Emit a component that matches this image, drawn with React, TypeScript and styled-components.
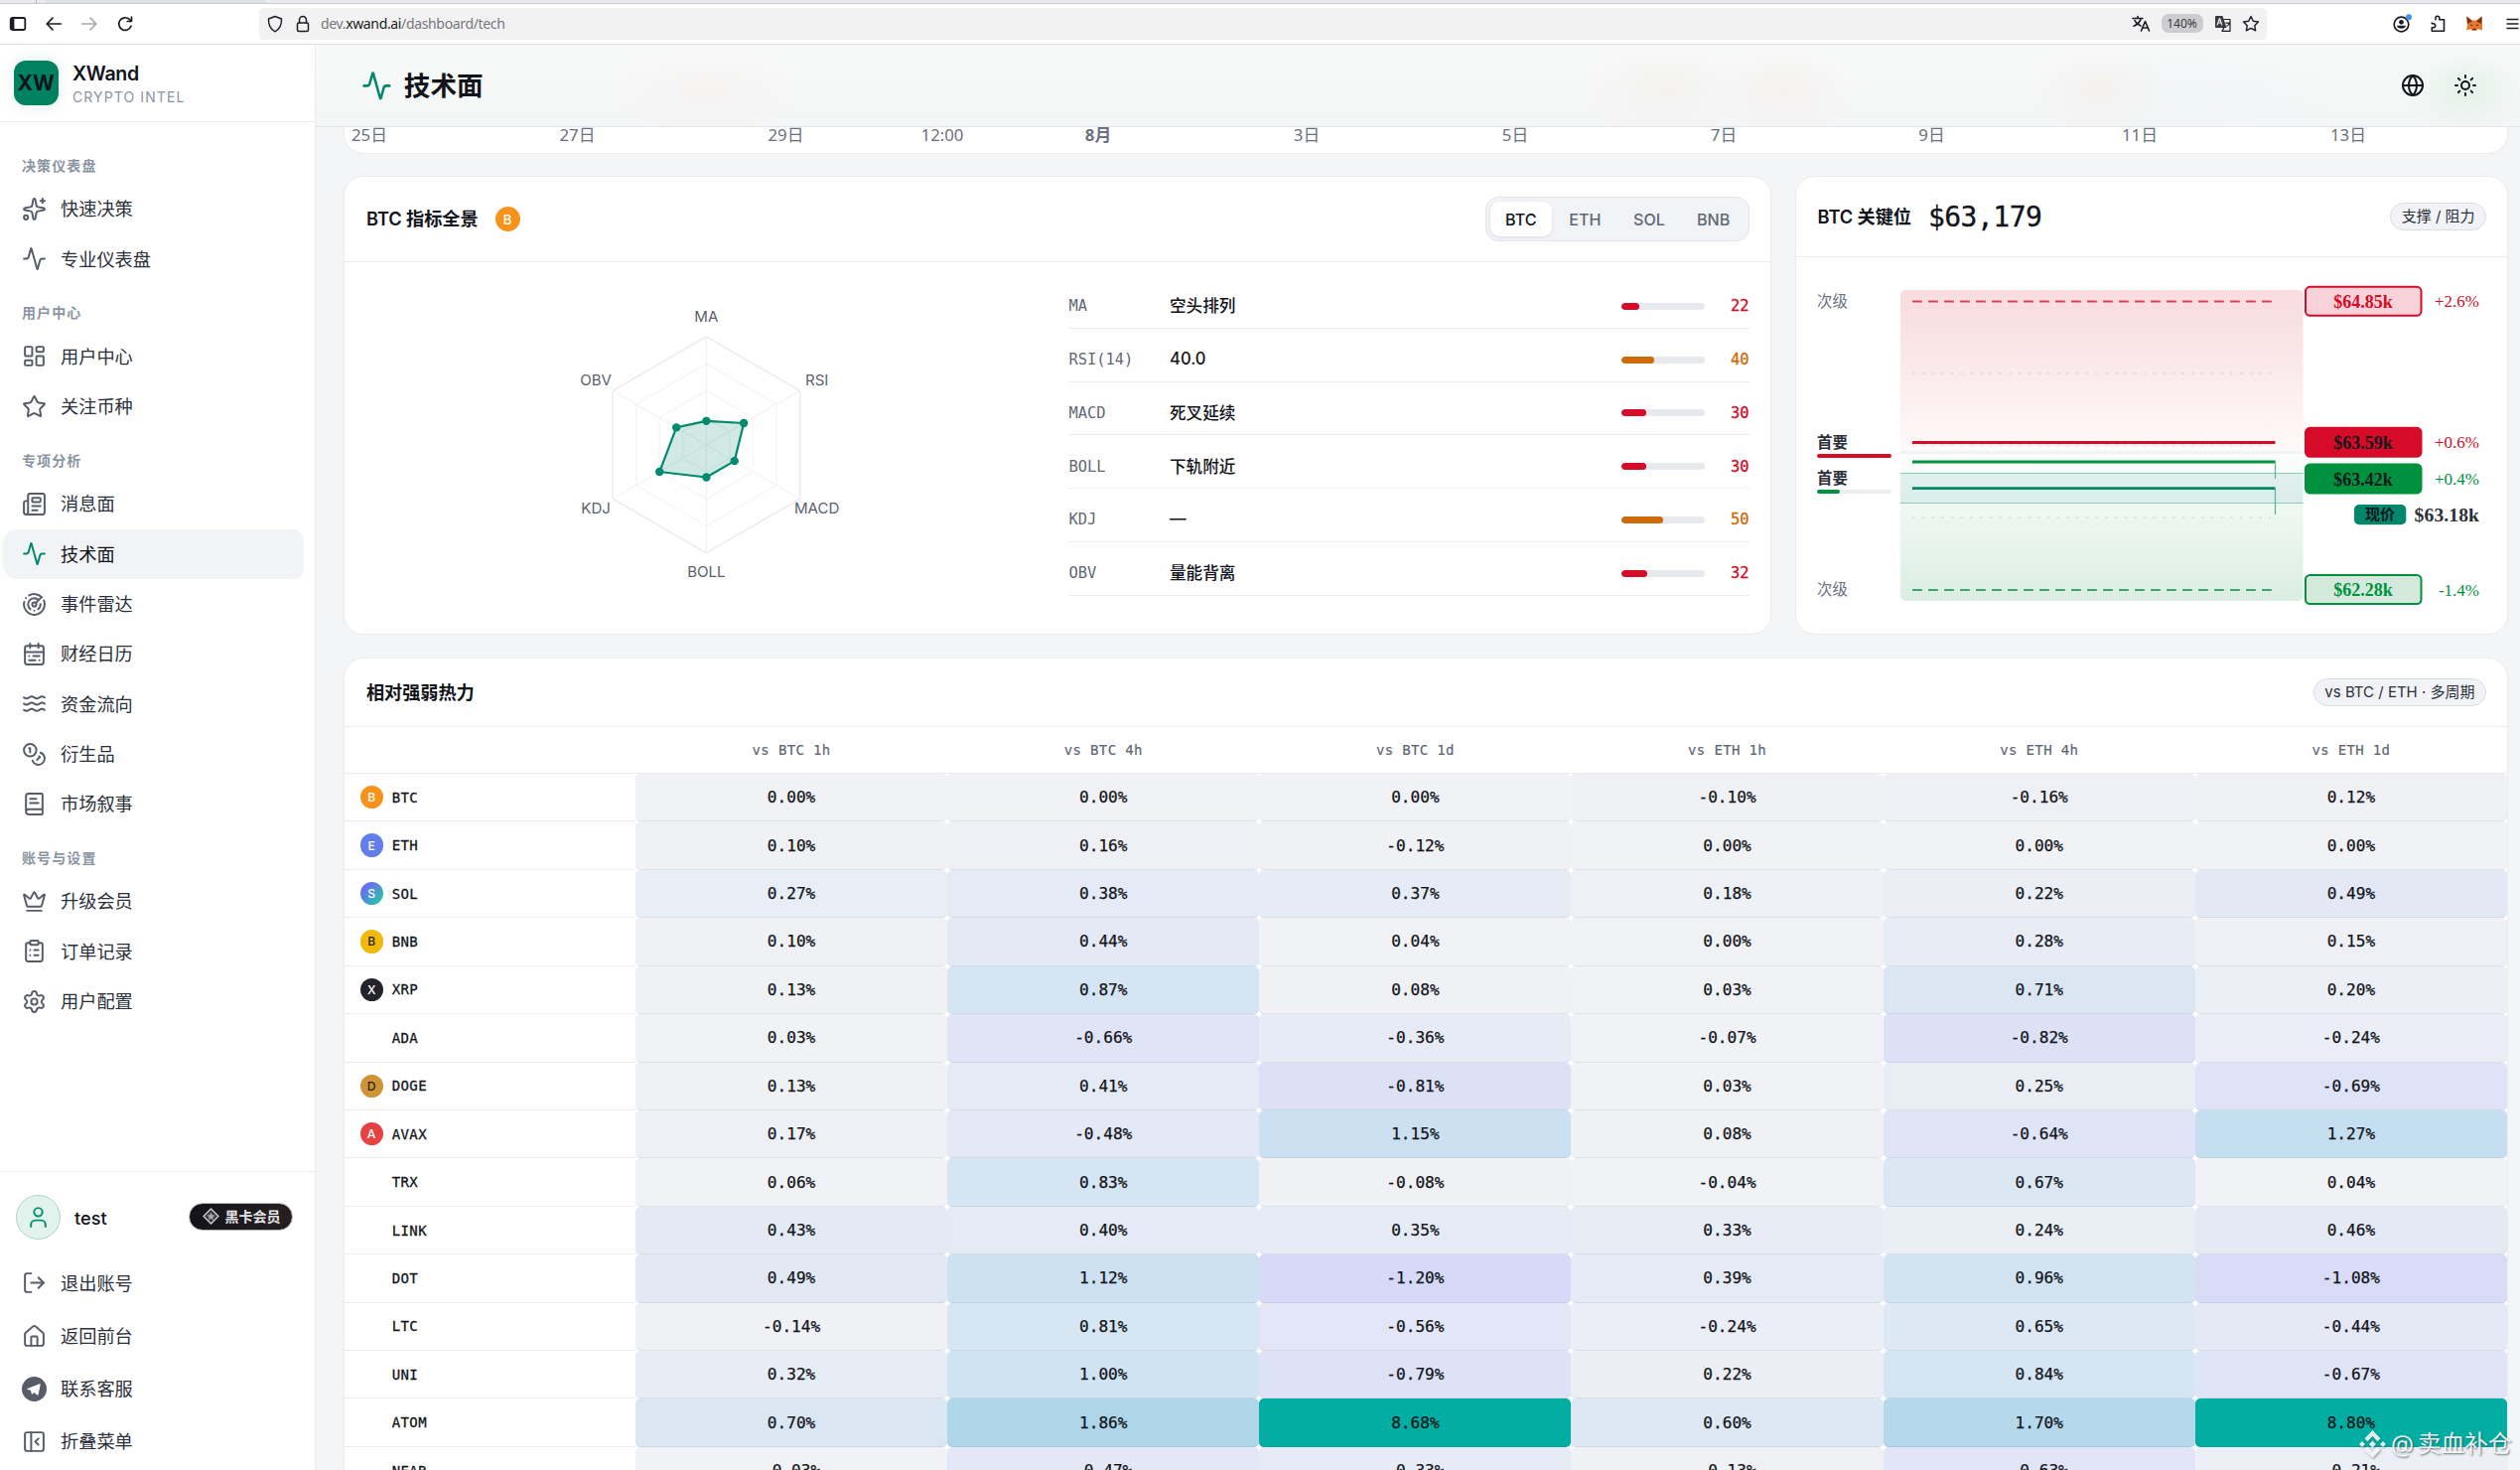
import React from "react";
import styled, { createGlobalStyle, css } from "styled-components";
import {
  Activity, BookText, CalendarRange, ClipboardList, Coins, Crown, Globe, House, LayoutDashboard,
  LogOut, Newspaper, PanelLeftClose, Radar, Settings, Sparkles, Star, Sun, User, Waves,
} from "lucide-react";

const sans = `Inter, "Noto Sans CJK SC", "Noto Sans", sans-serif`;
const mono = `"DejaVu Sans Mono", "Liberation Mono", "Noto Sans CJK SC", monospace`;
const serif = `"Liberation Serif", "Noto Sans CJK SC", serif`;

const c = {
  ink: "#11141a",
  text: "#2b303a",
  muted: "#5f6875",
  faint: "#8a95a3",
  line: "#ebecee",
  page: "#f4f5f7",
  brand: "#00876c",
  red: "#d50b27",
  green: "#00913f",
  amber: "#cf6a08",
};

const GlobalStyle = createGlobalStyle`
  * { box-sizing: border-box; }
  body { margin: 0; background: ${c.page}; font-family: ${sans}; color: ${c.ink}; }
`;

const Screen = styled.div`
  display: flex;
  flex-direction: column;
  width: 2538px;
  height: 1480px;
  overflow: hidden;
`;

/* ---------- browser chrome ---------- */
const TabStrip = styled.div`
  flex: none;
  display: flex;
  height: 4px;
  padding-left: 36px;
  background: #e9e9ee;
  border-bottom: 1px solid #c8c8cc;
`;
const TabEdge = styled.div`
  width: 222px;
  margin-left: 9px;
  background: #dde1e8;
`;
const TabDivider = styled.div`
  width: 1px;
  background: #b5b5bb;
`;
const Toolbar = styled.div`
  flex: none;
  display: flex;
  align-items: center;
  height: 41px;
  padding: 0 1.5px 1px 9px;
  background: #fff;
  border-bottom: 1px solid #dfdfe2;
  color: #1d1b24;
`;
const NavButtons = styled.div`
  display: flex;
  align-items: center;
  gap: 18px;
  width: 252px;
`;
const AddressBar = styled.div`
  display: flex;
  align-items: center;
  width: 2022px;
  height: 32px;
  padding: 0 7px 0 7px;
  border-radius: 6px;
  background: #f2f2f3;
`;
const Url = styled.div`
  margin-left: 9px;
  flex: 1;
  font: 14px "Noto Sans", sans-serif;
  letter-spacing: -0.35px;
  color: #77767d;
  b { font-weight: 400; color: #1d1b24; }
`;
const Zoom = styled.div`
  width: 42px;
  height: 19px;
  margin: 0 10.5px 0 9.5px;
  border-radius: 7px;
  background: #cdcdd1;
  font: 12px/19px "Noto Sans", sans-serif;
  text-align: center;
  color: #3a3942;
`;
const StarSlot = styled.span`
  display: flex;
  margin-left: 9px;
`;
const Extensions = styled.div`
  flex: 1;
  display: flex;
  align-items: center;
  justify-content: flex-end;
  gap: 17.5px;
`;
const MenuSlot = styled.span`
  display: flex;
  margin-left: 5.5px;
`;
const LockGap = styled.span`
  display: flex;
  margin-left: 10px;
`;

/* ---------- shell ---------- */
const Shell = styled.div`
  flex: 1;
  display: flex;
  min-height: 0;
`;
const Sidebar = styled.aside`
  flex: none;
  display: flex;
  flex-direction: column;
  width: 318px;
  background: #fff;
  border-right: 1px solid ${c.line};
`;
const Brand = styled.div`
  display: flex;
  align-items: center;
  gap: 14.5px;
  height: 78px;
  padding-left: 14px;
  border-bottom: 1px solid ${c.line};
`;
const Logo = styled.div`
  display: grid;
  place-items: center;
  width: 44.5px;
  height: 45px;
  border-radius: 12px;
  background: #008261;
  box-shadow: 0 0 16px rgba(0, 135, 108, 0.12);
  font-size: 21px;
  font-weight: 700;
  color: #10151b;
`;
const BrandName = styled.div`
  padding-top: 1px;
  font-size: 19.6px;
  font-weight: 600;
  line-height: 26px;
  letter-spacing: -0.3px;
`;
const BrandSub = styled.div`
  padding-top: 1px;
  font-size: 14px;
  line-height: 20px;
  letter-spacing: 1.1px;
  color: ${c.faint};
`;
const Nav = styled.nav`
  flex: 1;
  padding: 14.5px 11px 0 5px;
`;
const NavLabel = styled.div`
  height: 47.8px;
  padding: 18.5px 0 0 17px;
  font-size: 14px;
  font-weight: 600;
  line-height: 22px;
  letter-spacing: 1.1px;
  color: ${c.faint};
`;
const NavItem = styled.a<{ $active?: boolean; $foot?: boolean }>`
  display: flex;
  align-items: center;
  gap: 14px;
  height: 50.33px;
  margin-bottom: ${(p) => (p.$foot ? 2.8 : 0)}px;
  padding-left: 17px;
  border-radius: 11px;
  font-size: 18.2px;
  line-height: 26px;
  color: ${(p) => (p.$active ? c.ink : c.text)};
  svg { color: ${(p) => (p.$active ? c.brand : "#565d69")}; }
  ${(p) => p.$active && css`
    background: #f1f3f7;
    box-shadow: -7px 0 7px -9px rgba(0, 145, 80, 0.3);
  `}
`;
const SideFoot = styled.div`
  height: 301px;
  padding: 23px 11px 0 5px;
  border-top: 1px solid ${c.line};
`;
const Account = styled.div`
  display: flex;
  align-items: center;
  height: 45px;
  margin-bottom: 18.8px;
  padding: 0 11px 0 11px;
`;
const Avatar = styled.div`
  display: grid;
  place-items: center;
  width: 45px;
  height: 45px;
  border: 1px solid #a9d6c9;
  border-radius: 50%;
  background: #e4f2ee;
  color: #00916c;
`;
const UserName = styled.div`
  flex: 1;
  margin-left: 14px;
  font-size: 18.2px;
  font-weight: 500;
`;
const TierPill = styled.div`
  display: flex;
  align-items: center;
  gap: 6px;
  height: 28px;
  margin-bottom: 1px;
  padding: 0 11.5px 1px 12.5px;
  border: 1px solid #b9b9be;
  border-radius: 14px;
  background: linear-gradient(90deg, #14131a, #261f22);
  font-size: 14px;
  font-weight: 700;
  line-height: 20px;
  color: #e4e4e8;
`;

const Main = styled.main`
  flex: 1;
  display: flex;
  flex-direction: column;
  min-width: 0;
`;
const TopBar = styled.header`
  flex: none;
  display: flex;
  align-items: center;
  height: 83px;
  padding: 0 43px 0 46px;
  border-bottom: 1px solid #e3e5e8;
  background:
    radial-gradient(60px 42px at 2166px 46px, #e2f2e9, rgba(226, 242, 233, 0)),
    radial-gradient(70px 45px at 1798px 46px, rgba(245, 240, 238, 0.8), rgba(245, 240, 238, 0)),
    radial-gradient(90px 50px at 1360px 44px, rgba(243, 241, 239, 0.8), rgba(243, 241, 239, 0)),
    radial-gradient(70px 46px at 1480px 46px, rgba(245, 240, 238, 0.8), rgba(245, 240, 238, 0)),
    radial-gradient(100px 46px at 395px 46px, rgba(246, 241, 239, 0.6), rgba(246, 241, 239, 0)),
    radial-gradient(160px 50px at 1880px 50px, rgba(240, 246, 247, 0.9), rgba(240, 246, 247, 0)),
    linear-gradient(#f8faf9, #f4f5f6);
`;
const PageTitle = styled.h1`
  flex: 1;
  margin: 0 0 0 12px;
  padding-bottom: 3px;
  font-size: 26.6px;
  font-weight: 700;
`;
const TopActions = styled.div`
  display: flex;
  gap: 29px;
`;
const Content = styled.div`
  flex: 1;
  display: flex;
  flex-direction: column;
  min-height: 0;
  padding: 0 12px 0 28px;
`;
const cardBox = css`
  background: #fff;
  border: 1px solid ${c.line};
`;
const TimelineTail = styled.section`
  ${cardBox}
  flex: none;
  height: 27px;
  margin-bottom: 22px;
  border-top: 0;
  border-radius: 0 0 20px 20px;
  svg { display: block; overflow: visible; }
`;
const CardRow = styled.div`
  flex: none;
  display: grid;
  grid-template-columns: 1437.5px 718.5px;
  justify-content: space-between;
  height: 462px;
  margin-bottom: 23px;
`;
const Card = styled.section`
  ${cardBox}
  display: flex;
  flex-direction: column;
  border-radius: 20px;
  overflow: hidden;
`;
const CardHead = styled.div<{ $h: number }>`
  flex: none;
  display: flex;
  align-items: center;
  height: ${(p) => p.$h}px;
  padding: 0 21px;
  border-bottom: 1px solid ${c.line};
`;
const CardTitle = styled.h2`
  margin: 0 0 0 1px;
  padding-bottom: 3px;
  font-size: 18.2px;
  font-weight: 600;
  letter-spacing: -0.08px;
`;
const Spacer = styled.div`
  flex: 1;
`;
const Pill = styled.span`
  display: flex;
  align-items: center;
  height: 28px;
  padding: 0 10.5px;
  border: 1px solid #d9dde6;
  border-radius: 14px;
  background: #f1f3f7;
  font-size: 15px;
  font-weight: 400;
  line-height: 20px;
  color: ${c.text};
`;
const Coin = styled.span<{ $bg: string; $fg?: string; $size: number }>`
  display: grid;
  place-items: center;
  width: ${(p) => p.$size}px;
  height: ${(p) => p.$size}px;
  border-radius: 50%;
  background: ${(p) => p.$bg};
  color: ${(p) => p.$fg || "#fff"};
  font: 500 ${(p) => p.$size * 0.52}px ${sans};
`;
const CoinSlot = styled.span`
  width: 23.3px;
`;
const TitleCoin = styled.span`
  margin-left: 17px;
`;
const Segments = styled.div`
  display: flex;
  gap: 2.8px;
  height: 45.5px;
  padding: 4px;
  border: 1px solid #e1e4e9;
  border-radius: 13px;
  background: #f1f3f7;
`;
const Segment = styled.button<{ $on?: boolean }>`
  width: 61.8px;
  padding: 0;
  border: 0;
  border-radius: 9px;
  background: ${(p) => (p.$on ? "#fff" : "transparent")};
  box-shadow: ${(p) => (p.$on ? "0 1px 3px rgba(20,24,40,.1)" : "none")};
  color: ${(p) => (p.$on ? c.ink : c.muted)};
  font: 450 16.1px ${sans};
`;
const Price = styled.span`
  margin-left: 17px;
  font: 28px ${mono};
  letter-spacing: -0.5px;
  -webkit-text-stroke: 0.3px currentColor;
`;
const PanoramaBody = styled.div`
  flex: 1;
  display: flex;
`;
const RadarBox = styled.div`
  width: 729.5px;
  svg { display: block; }
`;
const Indicators = styled.div`
  flex: 1;
  display: flex;
  flex-direction: column;
  gap: 9.8px;
  padding: 22.8px 21px 0 0;
`;
const Indicator = styled.div`
  display: grid;
  grid-template-columns: 101.5px 1fr 84px 45px;
  align-items: center;
  height: 44px;
  border-bottom: 1px solid ${c.line};
`;
const IndName = styled.span`
  font: 15.4px ${mono};
  color: ${c.muted};
`;
const IndValue = styled.span`
  padding-bottom: 2px;
  font-size: 16.6px;
  font-weight: 500;
`;
const Track = styled.div`
  height: 7px;
  border-radius: 3.5px;
  background: #e6e9ee;
  overflow: hidden;
`;
const Fill = styled.div<{ $color: string }>`
  height: 100%;
  border-radius: 3.5px;
  background: ${(p) => p.$color};
`;
const Score = styled.span<{ $color: string }>`
  font: 15.4px ${mono};
  text-align: right;
  color: ${(p) => p.$color};
  -webkit-text-stroke: 0.35px currentColor;
`;

/* ---------- heat table ---------- */
const HeatCard = styled(Card)`
  flex: 1;
  border-bottom: 0;
  border-radius: 20px 20px 0 0;
`;
const HeatRow = styled.div<{ $head?: boolean }>`
  flex: none;
  display: grid;
  grid-template-columns: 293px repeat(6, 1fr);
  height: ${(p) => (p.$head ? 47 : 48.43)}px;
  ${(p) => p.$head && css`border-bottom: 1px solid ${c.line};`}
`;
const HeatHead = styled.div`
  display: grid;
  place-items: center;
  font: 14px ${mono};
  letter-spacing: 0.35px;
  color: ${c.muted};
  -webkit-text-stroke: 0.2px currentColor;
`;
const Asset = styled.div`
  display: flex;
  align-items: center;
  gap: 9px;
  padding-left: 15.5px;
  border-bottom: 1px solid ${c.line};
  font: 14px ${mono};
  letter-spacing: 0.35px;
  -webkit-text-stroke: 0.3px currentColor;
  ${Coin} { -webkit-text-stroke: 0; letter-spacing: 0; }
`;
const Heat = styled.div`
  display: grid;
  place-items: center;
  border-bottom: 1px solid rgba(20, 24, 32, 0.07);
  border-radius: 5px;
  font: 16.1px ${mono};
  -webkit-text-stroke: 0.25px currentColor;
`;
const Watermark = styled.div`
  position: absolute;
  left: 2376px;
  top: 1438px;
  display: flex;
  align-items: center;
  gap: 5px;
  font-size: 23.8px;
  line-height: 32px;
  word-spacing: -3px;
  white-space: nowrap;
  color: rgba(255, 255, 255, 0.88);
  text-shadow: 1px 1px 2px rgba(60, 70, 80, 0.75);
  svg { filter: drop-shadow(1px 1px 1px rgba(60, 70, 80, 0.6)); }
`;

const sections = [
  { label: "决策仪表盘", items: [["快速决策", Sparkles], ["专业仪表盘", Activity]] },
  { label: "用户中心", items: [["用户中心", LayoutDashboard], ["关注币种", Star]] },
  {
    label: "专项分析",
    items: [["消息面", Newspaper], ["技术面", Activity], ["事件雷达", Radar], ["财经日历", CalendarRange],
      ["资金流向", Waves], ["衍生品", Coins], ["市场叙事", BookText]],
  },
  { label: "账号与设置", items: [["升级会员", Crown], ["订单记录", ClipboardList], ["用户配置", Settings]] },
] as { label: string; items: [string, React.ElementType][] }[];

const ticks: [string, number][] = [
  ["25日", 25], ["27日", 234.5], ["29日", 444.5], ["12:00", 602], ["8月", 759], ["3日", 969], ["5日", 1179],
  ["7日", 1389], ["9日", 1598.5], ["11日", 1808], ["13日", 2018],
];

const indicators: [string, string, number][] = [
  ["MA", "空头排列", 22], ["RSI(14)", "40.0", 40], ["MACD", "死叉延续", 30],
  ["BOLL", "下轨附近", 30], ["KDJ", "—", 50], ["OBV", "量能背离", 32],
];

const heads = ["vs BTC 1h", "vs BTC 4h", "vs BTC 1d", "vs ETH 1h", "vs ETH 4h", "vs ETH 1d"];
const rows: [string, number[]][] = [
  ["BTC", [0, 0, 0, -0.1, -0.16, 0.12]],
  ["ETH", [0.1, 0.16, -0.12, 0, 0, 0]],
  ["SOL", [0.27, 0.38, 0.37, 0.18, 0.22, 0.49]],
  ["BNB", [0.1, 0.44, 0.04, 0, 0.28, 0.15]],
  ["XRP", [0.13, 0.87, 0.08, 0.03, 0.71, 0.2]],
  ["ADA", [0.03, -0.66, -0.36, -0.07, -0.82, -0.24]],
  ["DOGE", [0.13, 0.41, -0.81, 0.03, 0.25, -0.69]],
  ["AVAX", [0.17, -0.48, 1.15, 0.08, -0.64, 1.27]],
  ["TRX", [0.06, 0.83, -0.08, -0.04, 0.67, 0.04]],
  ["LINK", [0.43, 0.4, 0.35, 0.33, 0.24, 0.46]],
  ["DOT", [0.49, 1.12, -1.2, 0.39, 0.96, -1.08]],
  ["LTC", [-0.14, 0.81, -0.56, -0.24, 0.65, -0.44]],
  ["UNI", [0.32, 1, -0.79, 0.22, 0.84, -0.67]],
  ["ATOM", [0.7, 1.86, 8.68, 0.6, 1.7, 8.8]],
  ["NEAR", [-0.03, -0.47, -0.33, -0.13, -0.63, -0.21]],
];
const coins: Record<string, [string, string?]> = {
  BTC: ["#f7931a"], ETH: ["#627eea"], SOL: ["linear-gradient(135deg, #6a6ff0 25%, #22c9a4 90%)"],
  BNB: ["#f0b90b", "#2b2118"], XRP: ["#23232b"], DOGE: ["#cf9436", "#2b2118"], AVAX: ["#e84142"],
};

type Stop = [number, number[]];
const up: Stop[] = [
  [0, [241, 242, 246]], [0.12, [240, 241, 245]], [0.25, [233, 238, 245]], [0.5, [226, 233, 244]], [0.7, [218, 231, 243]],
  [0.87, [213, 229, 243]], [1.27, [198, 223, 240]], [1.86, [174, 213, 234]], [8.5, [2, 174, 162]], [10, [2, 174, 162]],
];
const down: Stop[] = [
  [0, [241, 242, 246]], [0.14, [239, 241, 245]], [0.3, [232, 236, 246]], [0.66, [224, 228, 247]],
  [0.82, [220, 225, 246]], [1.2, [214, 217, 248]], [10, [190, 195, 248]],
];
function heatColor(v: number) {
  const scale = v < 0 ? down : up;
  const a = Math.abs(v);
  const i = Math.max(1, scale.findIndex((s) => a <= s[0]));
  const [x0, c0] = scale[i - 1];
  const [x1, c1] = scale[i];
  const t = (a - x0) / (x1 - x0);
  return `rgb(${c0.map((n, k) => Math.round(n + (c1[k] - n) * t)).join(",")})`;
}
const scoreColor = (n: number) => (n < 40 ? c.red : c.amber);

function RadarChart() {
  const cx = 364.4, cy = 183.8, R = 108.9;
  const at = (i: number, r: number): [number, number] => {
    const a = (Math.PI / 3) * i - Math.PI / 2;
    return [cx + Math.cos(a) * r, cy + Math.sin(a) * r];
  };
  const ring = (r: number) => [0, 1, 2, 3, 4, 5].map((i) => at(i, r).join(",")).join(" ");
  const values = [22, 40, 30, 30, 50, 32];
  const names = ["MA", "RSI", "MACD", "BOLL", "KDJ", "OBV"];
  return (
    <svg width="729" height="373">
      {[0.25, 0.5, 0.75].map((k) => <polygon key={k} points={ring(R * k)} fill="none" stroke="#f5f5f6" strokeWidth="1.3" />)}
      <polygon points={ring(R)} fill="none" stroke="#ebebed" strokeWidth="1.5" />
      {names.map((n, i) => {
        const [x, y] = at(i, R);
        return <line key={n} x1={cx} y1={cy} x2={x} y2={y} stroke="#f3f3f4" strokeWidth="1.3" />;
      })}
      <polygon points={values.map((v, i) => at(i, (R * v) / 100).join(",")).join(" ")} fill="rgba(0,135,108,.18)" stroke="#008a6e" strokeWidth="2.2" strokeLinejoin="round" />
      {values.map((v, i) => {
        const [x, y] = at(i, (R * v) / 100);
        return <circle key={i} cx={x} cy={y} r="4.2" fill="#008a6e" />;
      })}
      {names.map((n, i) => {
        const [x, y] = at(i, 128.5);
        return <text key={n} x={x} y={y + 4.8} textAnchor="middle" fontFamily={sans} fontSize="15.1" fill="#5c6270">{n}</text>;
      })}
    </svg>
  );
}

function LevelsChart() {
  const boxes: [number, string, string, string, string][] = [
    [44.3, "$64.85k", "#f7d2d8", c.red, "+2.6%"],
    [186.3, "$63.59k", c.red, c.red, "+0.6%"],
    [223, "$63.42k", c.green, c.green, "+0.4%"],
    [334.5, "$62.28k", "#d2e9dc", c.green, "-1.4%"],
  ];
  return (
    <svg width="716" height="378" fontFamily={serif}>
      <defs>
        <linearGradient id="res" x1="0" y1="0" x2="0" y2="1">
          <stop offset="0" stopColor="#f8dce0" />
          <stop offset=".25" stopColor="#f9e2e4" />
          <stop offset="1" stopColor="#fffafa" />
        </linearGradient>
        <linearGradient id="sup" x1="0" y1="0" x2="0" y2="1">
          <stop offset="0" stopColor="#fcfefd" />
          <stop offset="1" stopColor="#dbeee3" />
        </linearGradient>
      </defs>
      <rect x="105" y="33" width="405.5" height="165" rx="5" fill="url(#res)" />
      <rect x="105" y="195" width="405.5" height="151" rx="5" fill="url(#sup)" />
      <rect x="105" y="195" width="405.5" height="3" fill="rgba(60,60,70,.05)" />
      {[117, 189.3, 262].map((y) => (
        <line key={y} x1="117" x2="478" y1={y} y2={y} stroke="rgba(90,60,70,.09)" strokeWidth="2" strokeDasharray="2.8 6.9" />
      ))}
      <rect x="105" y="217.5" width="405.5" height="30" fill="rgba(0,135,120,.09)" />
      <path d="M105 217.5h405.5M105 247.5h405.5" stroke="#8ccbbd" strokeWidth="1" />
      <line x1="117" x2="479" y1="44.5" y2="44.5" stroke="#db405a" strokeWidth="2.2" strokeDasharray="9.8 6.2" />
      <line x1="117" x2="479" y1="335" y2="335" stroke="#3da46d" strokeWidth="2.2" strokeDasharray="9.8 6.2" />
      <line x1="117" x2="482.5" y1="186.5" y2="186.5" stroke={c.red} strokeWidth="3" />
      <line x1="117" x2="482.5" y1="206" y2="206" stroke={c.green} strokeWidth="2.8" />
      <path d="M482.5 206v17M482.5 233v26" stroke="#5fb39b" strokeWidth="1.2" />
      <line x1="117" x2="482.5" y1="232.7" y2="232.7" stroke={c.brand} strokeWidth="2.8" />

      {boxes.map(([y, label, fill, stroke, pct], i) => (
        <g key={label}>
          <rect x="513" y={y - 14.5} width="116.5" height="29" rx="4.5" fill={fill} stroke={stroke} strokeWidth="2" />
          <text x="541.2" y={y + 6.7} fontSize="18" fontWeight="700" textLength="59.5" fill={i === 1 || i === 2 ? "#15181c" : stroke}>{label}</text>
          <text x="688" y={y + 6} fontSize="17" textAnchor="end" fill={stroke}>{pct}</text>
        </g>
      ))}
      <rect x="562" y="249" width="52.3" height="20.3" rx="5" fill={c.brand} />
      <text x="588" y="263.7" fontSize="15" fontWeight="700" fontFamily={sans} textAnchor="middle" fill="#10151b">现价</text>
      <text x="622.6" y="266.3" fontSize="19.6" fontWeight="700" textLength="65.4" fill="#2b303a">$63.18k</text>

      <g fontFamily={sans} fontSize="15.4" fill="#6b7280">
        <text x="21" y="49.5">次级</text>
        <text x="21" y="339.5">次级</text>
        <text x="21" y="192" fontWeight="700" fill="#2b303a">首要</text>
        <text x="21" y="228" fontWeight="700" fill="#2b303a">首要</text>
      </g>
      <rect x="21" y="198" width="75" height="4" rx="2" fill={c.red} />
      <rect x="21" y="234" width="75" height="4" rx="2" fill="#ededef" />
      <rect x="21" y="234" width="23" height="4" rx="2" fill={c.green} />
    </svg>
  );
}

const stroke = { fill: "none", stroke: "currentColor", strokeWidth: 1.5, strokeLinecap: "round" as const, strokeLinejoin: "round" as const };

function BrowserChrome() {
  return (
    <>
      <TabStrip><TabDivider /><TabEdge /></TabStrip>
      <Toolbar>
        <NavButtons>
          <svg width="18" height="16" viewBox="0 0 18 16"><rect x="1.7" y="2" width="14.6" height="12" rx="1.8" {...stroke} strokeWidth="1.8" /><path d="M2 2.5h3.4v11H2z" fill="currentColor" /></svg>
          <svg width="18" height="16" viewBox="0 0 18 16"><path d="M16.3 8H2.2M8 2.2 2.2 8 8 13.8" {...stroke} strokeWidth="1.7" /></svg>
          <svg width="18" height="16" viewBox="0 0 18 16" color="#a9a8ae"><path d="M1.7 8H15.8M10 2.2 15.8 8 10 13.8" {...stroke} strokeWidth="1.7" /></svg>
          <svg width="18" height="16" viewBox="0 0 18 16"><path d="M15 10.2A6.3 6.3 0 1 1 13.5 3.6L15.3 5.2M15.5 1.2V5.5H11.2" {...stroke} strokeWidth="1.7" /></svg>
        </NavButtons>
        <AddressBar>
          <svg width="18" height="18" viewBox="0 0 18 18"><path d="M9 1.5 15.5 4c.3 6-2 10.5-6.5 12.8C4.5 14.5 2.2 10 2.5 4Z" {...stroke} strokeWidth="1.4" /></svg>
          <LockGap><svg width="18" height="18" viewBox="0 0 18 18"><rect x="3.5" y="8" width="11" height="8.5" rx="1.5" {...stroke} /><path d="M5.5 8V5a3.5 3.5 0 0 1 7 0v3" {...stroke} /></svg></LockGap>
          <Url>dev.<b>xwand.ai</b>/dashboard/tech</Url>
          <svg width="20" height="18" viewBox="0 0 20 18"><path d="M1 3.5h10M6 1.5v2M9.3 3.5C8.5 7 5.5 9.7 2 11.2M3 5.5c1 2.5 3 4.3 6 5.5M9.5 16 13.5 6.5 17.5 16M11 13h5.2" {...stroke} strokeWidth="1.6" /></svg>
          <Zoom>140%</Zoom>
          <svg width="20" height="18" viewBox="0 0 20 18"><path d="M3 1h6.5l4 12H3a1 1 0 0 1-1-1V2a1 1 0 0 1 1-1Z" fill="#3a3942" /><path d="m4.2 10 2.3-6.5 2.3 6.5M5 8h3" {...stroke} stroke="#eee" strokeWidth="1.2" /><path d="M11 4.5h6v11.8H9l1.7-3.2M13 8.2h3.2c-.2 1.6-1.2 2.6-2.4 3" {...stroke} strokeWidth="1.2" /></svg>
          <StarSlot><svg width="18" height="18" viewBox="0 0 24 24"><path d="m12 2 3.1 6.3 6.9 1-5 4.9 1.2 6.8-6.2-3.2L5.8 21 7 14.2 2 9.3l6.9-1Z" {...stroke} strokeWidth="1.9" /></svg></StarSlot>
        </AddressBar>
        <Extensions>
          <svg width="20" height="20" viewBox="0 0 20 20"><circle cx="9.5" cy="10.5" r="7.3" {...stroke} strokeWidth="1.7" /><circle cx="9.5" cy="8.3" r="2.4" fill="currentColor" /><path d="M5 11.8h9c0 3.8-9 3.8-9 0Z" fill="currentColor" /><circle cx="17" cy="3.3" r="3" fill="#3c96e0" /></svg>
          <svg width="19" height="20" viewBox="0 0 19 20"><path d="M7 5.8V4.2a1.9 1.9 0 0 1 3.8 0v1.6h4.7v11.4H3.3v-3.4h1.4a2 2 0 0 0 0-4H3.3V9" {...stroke} strokeWidth="1.6" /></svg>
          <svg width="18" height="18" viewBox="0 0 18 18">
            <path d="m1 1.5 6 4h4l6-4v14l-4.5-1.2L11 16H7l-1.5-1.7L1 15.5l1-5Z" fill="#e8762b" />
            <path d="m1.5 1.5 5.500 5-5 2.500ZM16.5 1.5l-5.500 5 5 2.500Z" fill="#76351a" />
            <path d="m5 9.5 2.4.8-1.5 1.2ZM13 9.5l-2.4.8 1.5 1.2ZM7.3 13.8h3.4l-.5 1.2H7.8Z" fill="#3a2a26" />
          </svg>
          <MenuSlot><svg width="13" height="18" viewBox="0 0 13 18"><path d="M.5 4.500h12M.5 9h12M.5 13.500h12" {...stroke} strokeLinecap="butt" strokeWidth="1.5" /></svg></MenuSlot>
        </Extensions>
      </Toolbar>
    </>
  );
}

export default function App() {
  const icon = { size: 25, strokeWidth: 1.9 };
  return (
    <>
      <GlobalStyle />
      <Screen>
        <BrowserChrome />
        <Shell>
          <Sidebar>
            <Brand>
              <Logo>XW</Logo>
              <div>
                <BrandName>XWand</BrandName>
                <BrandSub>CRYPTO INTEL</BrandSub>
              </div>
            </Brand>
            <Nav>
              {sections.map((s) => (
                <React.Fragment key={s.label}>
                  <NavLabel>{s.label}</NavLabel>
                  {s.items.map(([name, Icon]) => (
                    <NavItem key={name} $active={name === "技术面"}><Icon {...icon} />{name}</NavItem>
                  ))}
                </React.Fragment>
              ))}
            </Nav>
            <SideFoot>
              <Account>
                <Avatar><User size={25} strokeWidth={1.9} /></Avatar>
                <UserName>test</UserName>
                <TierPill>
                  <svg width="17" height="17" viewBox="0 0 17 17"><path d="M8.5 1 16 8.5 8.5 16 1 8.5Z" fill="#3a3a40" stroke="#d0d0d4" strokeWidth="1.3" /><path d="m8.5 4.5 1.2 2.8 2.9.2-2.2 2 .7 2.9-2.6-1.6-2.6 1.6.7-2.9-2.2-2 2.9-.2Z" fill="#a9a9ae" /></svg>
                  黑卡会员
                </TierPill>
              </Account>
              <NavItem $foot><LogOut {...icon} />退出账号</NavItem>
              <NavItem $foot><House {...icon} />返回前台</NavItem>
              <NavItem $foot>
                <svg width="25" height="25" viewBox="0 0 24 24"><circle cx="12" cy="12" r="12" fill="currentColor" /><path d="M5 11.8 17 7c.6-.2 1.1.1.9.9l-2 9.3c-.1.7-.6.8-1.1.5l-3.1-2.3-1.5 1.5c-.3.3-.6.2-.7-.2l-.9-3.3-3.5-1.1c-.6-.2-.6-.4-.1-.5ZM9.7 13.3l5.7-4.4-4.8 5Z" fill="#fff" /></svg>
                联系客服
              </NavItem>
              <NavItem $foot><PanelLeftClose {...icon} />折叠菜单</NavItem>
            </SideFoot>
          </Sidebar>

          <Main>
            <TopBar>
              <Activity size={30.8} strokeWidth={2} color={c.brand} />
              <PageTitle>技术面</PageTitle>
              <TopActions>
                <Globe size={24} strokeWidth={2} />
                <Sun size={24} strokeWidth={2} />
              </TopActions>
            </TopBar>
            <Content>
              <TimelineTail>
                <svg width="2178" height="26">
                  {ticks.map(([t, x]) => (
                    <text key={t} x={x} y="14" textAnchor="middle" fontSize="16.8" fontFamily={`"Noto Sans", "Noto Sans CJK SC", sans-serif`} fontWeight={t === "8月" ? 700 : 400} fill="#6b7080">{t}</text>
                  ))}
                </svg>
              </TimelineTail>

              <CardRow>
                <Card>
                  <CardHead $h={86}>
                    <CardTitle>BTC 指标全景</CardTitle>
                    <TitleCoin><Coin $bg="#f7931a" $size={25.2}>B</Coin></TitleCoin>
                    <Spacer />
                    <Segments>
                      {["BTC", "ETH", "SOL", "BNB"].map((t) => <Segment key={t} $on={t === "BTC"}>{t}</Segment>)}
                    </Segments>
                  </CardHead>
                  <PanoramaBody>
                    <RadarBox><RadarChart /></RadarBox>
                    <Indicators>
                      {indicators.map(([name, value, score]) => (
                        <Indicator key={name}>
                          <IndName>{name}</IndName>
                          <IndValue>{value}</IndValue>
                          <Track><Fill $color={scoreColor(score)} style={{ width: `${score}%` }} /></Track>
                          <Score $color={scoreColor(score)}>{score}</Score>
                        </Indicator>
                      ))}
                    </Indicators>
                  </PanoramaBody>
                </Card>

                <Card>
                  <CardHead $h={81}>
                    <CardTitle>BTC 关键位</CardTitle>
                    <Price>$63,179</Price>
                    <Spacer />
                    <Pill>支撑 / 阻力</Pill>
                  </CardHead>
                  <LevelsChart />
                </Card>
              </CardRow>

              <HeatCard>
                <CardHead $h={69}>
                  <CardTitle>相对强弱热力</CardTitle>
                  <Spacer />
                  <Pill>vs BTC / ETH · 多周期</Pill>
                </CardHead>
                <HeatRow $head>
                  <span />
                  {heads.map((h) => <HeatHead key={h}>{h}</HeatHead>)}
                </HeatRow>
                {rows.map(([name, vals]) => (
                  <HeatRow key={name}>
                    <Asset>
                      {coins[name] ? <Coin $bg={coins[name][0]} $fg={coins[name][1]} $size={23.3}>{name[0]}</Coin> : <CoinSlot />}
                      {name}
                    </Asset>
                    {vals.map((v, i) => <Heat key={i} style={{ background: heatColor(v) }}>{v.toFixed(2)}%</Heat>)}
                  </HeatRow>
                ))}
              </HeatCard>
            </Content>
          </Main>
        </Shell>
      </Screen>
      <Watermark>
        <svg width="27" height="28" viewBox="0 0 27 28" fill="rgba(255,255,255,.85)">
          <path d="m13.5 0 8 8.3-3 3-5-5.2-5 5.2-3-3ZM13.5 28l8-8.3-3-3-5 5.2-5-5.2-3 3ZM3 11l3 3-3 3-3-3ZM24 11l3 3-3 3-3-3ZM13.5 10.5 17 14l-3.5 3.5L10 14Z" />
        </svg>
        @ 卖血补仓
      </Watermark>
    </>
  );
}
